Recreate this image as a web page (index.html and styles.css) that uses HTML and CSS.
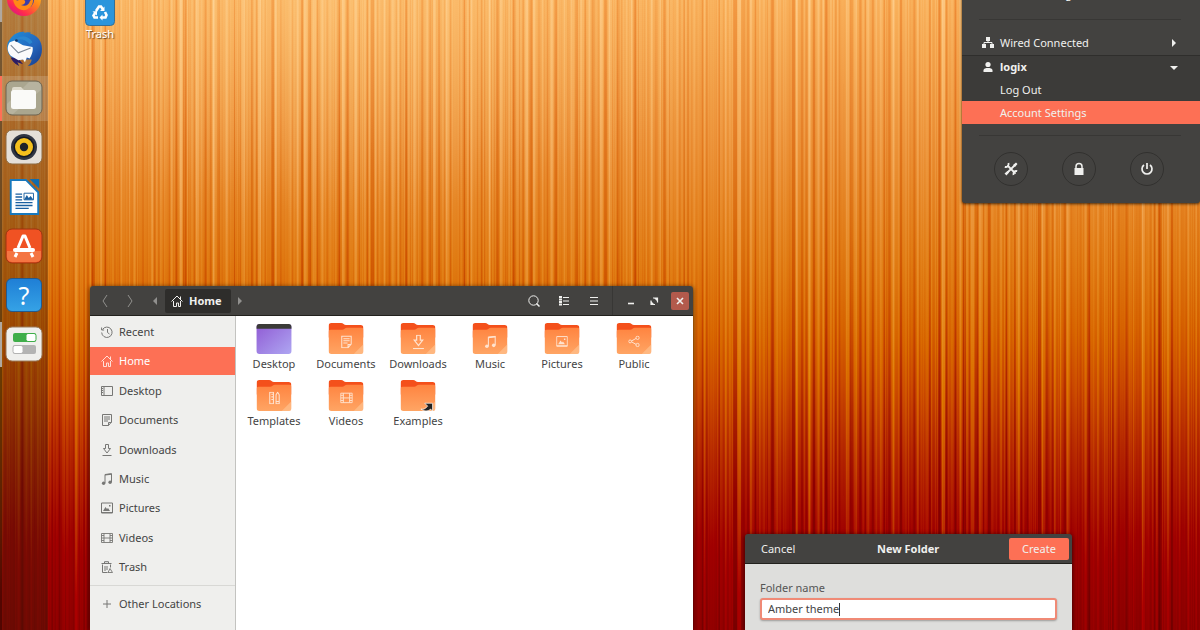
FILE: index.html
```
<!DOCTYPE html>
<html lang="en">
  <head>
    <meta charset="utf-8">
    <title>Desktop</title>
    <meta name="viewport" content="width=device-width, initial-scale=1">
    <link rel="stylesheet" href="styles.css">
  </head>
  <body>
    <!-- wallpaper -->
    <svg class="wallpaper" viewBox="0 0 1200 630" preserveAspectRatio="none" aria-hidden="true">
      <defs>
        <linearGradient id="wall" x1="0" y1="-100" x2="0" y2="700" gradientUnits="userSpaceOnUse">
          <stop offset="0" stop-color="#ffc880"/>
          <stop offset="0.12" stop-color="#f9b15c"/>
          <stop offset="0.3" stop-color="#ec9238"/>
          <stop offset="0.45" stop-color="#e07a12"/>
          <stop offset="0.54" stop-color="#d76400"/>
          <stop offset="0.61" stop-color="#cb4a00"/>
          <stop offset="0.7" stop-color="#b42400"/>
          <stop offset="0.8" stop-color="#a00000"/>
          <stop offset="1" stop-color="#820000"/>
        </linearGradient>
        <radialGradient id="glow" cx="460" cy="0" r="420" gradientUnits="userSpaceOnUse" gradientTransform="matrix(1 0 0 .5 0 0)">
          <stop offset="0" stop-color="#ffd28c" stop-opacity=".4"/>
          <stop offset="1" stop-color="#ffd28c" stop-opacity="0"/>
        </radialGradient>
        <filter id="streaks" x="-200" y="-200" width="1600" height="1030" filterUnits="userSpaceOnUse" color-interpolation-filters="sRGB">
          <feTurbulence type="fractalNoise" baseFrequency="0.24 0.00001" numOctaves="3" seed="12" result="noise"/>
          <feColorMatrix in="noise" values="1 0 0 0 0  0 1 0 0 0  0 0 1 0 0  0 0 0 0 1" result="solid"/>
          <feDisplacementMap in="SourceGraphic" in2="solid" scale="260" xChannelSelector="A" yChannelSelector="R" result="moved"/>
          <feColorMatrix in="solid" values="-.7 0 0 0 .85  -.7 0 0 0 .85  -.7 0 0 0 .85  0 0 0 0 1" result="gray"/>
          <feBlend in="gray" in2="moved" mode="soft-light"/>
        </filter>
      </defs>
      <g filter="url(#streaks)">
        <rect x="-200" y="-200" width="1600" height="1030" fill="url(#wall)"/>
        <rect x="-200" y="-200" width="1600" height="1030" fill="url(#glow)"/>
      </g>
    </svg>

    <!-- shared icons -->
    <svg class="sprite" aria-hidden="true">
      <defs>
        <linearGradient id="folder-front" x1="0" y1="0" x2="0" y2="1">
          <stop offset="0" stop-color="#ff8440"/>
          <stop offset="1" stop-color="#ffa564"/>
        </linearGradient>
        <symbol id="folder" viewBox="0 0 36 32">
          <path d="M0 3a3 3 0 0 1 3-3h10c2 0 3 2 5 2h15a3 3 0 0 1 3 3v10H0z" fill="#f4501b"/>
          <path d="M0 9a2 2 0 0 1 2-2h12c2 0 3-2 5-2h15a2 2 0 0 1 2 2v22a3 3 0 0 1-3 3H3a3 3 0 0 1-3-3z" fill="url(#folder-front)"/>
          <path d="M36 22v7a3 3 0 0 1-3 3h-7z" fill="#ffc08d" opacity=".7"/>
        </symbol>
        <symbol id="home" viewBox="0 0 12 12">
          <path d="M.5 6.500 6 1l5.500 5.500M9.500 1.500v2.500M2.500 6v5.500h3V8h2v3.500h2V6" fill="none" stroke="currentColor"/>
        </symbol>
        <symbol id="recent" viewBox="0 0 12 12">
          <path d="M1.500 3.500a5.200 5.200 0 1 1-.8 3M.6 1.500v2.500h2.500M6.500 3v3.500l2 1.500" fill="none" stroke="currentColor"/>
        </symbol>
        <symbol id="desktop" viewBox="0 0 12 12">
          <path d="M.5 1.500h11v9H.5zM3 1.500v9M.5 3.500h1.500M.5 5.500h1.500M.5 7.500h1.500" fill="none" stroke="currentColor"/>
        </symbol>
        <symbol id="documents" viewBox="0 0 12 12">
          <path d="M1.500.5h9v7.500l-3 3.500h-6zM3 3h6M3 5h6M3 7h4M7.500 11.500V8.500h3" fill="none" stroke="currentColor"/>
        </symbol>
        <symbol id="downloads" viewBox="0 0 12 12">
          <path d="M4.500.5h3v4h2L6 9 2.500 4.500h2zM1.500 11.500h9" fill="none" stroke="currentColor"/>
        </symbol>
        <symbol id="music" viewBox="0 0 12 12">
          <path d="M4 10V1.500L10.500.7V9" fill="none" stroke="currentColor"/>
          <path d="M4 2.500 10.500 1.700V.5L4 1.200z" fill="currentColor"/>
          <circle cx="2.600" cy="10.200" r="1.700" fill="currentColor"/><circle cx="9.100" cy="9.300" r="1.700" fill="currentColor"/>
        </symbol>
        <symbol id="pictures" viewBox="0 0 12 12">
          <path d="M.5 1h11v10H.5z" fill="none" stroke="currentColor"/>
          <path d="M2 9l2.500-4L6 7l1-1 2 3zM8 3h1.500v1.500H8zM.5 10h11v1H.5z" fill="currentColor"/>
        </symbol>
        <symbol id="videos" viewBox="0 0 12 12">
          <path d="M.5 1.500h11v9H.5zM3 1.500v9M9 1.500v9M3 6h6M.5 3.500H3M.5 6H3M.5 8.500H3M9 3.500h2.500M9 6h2.500M9 8.500h2.500" fill="none" stroke="currentColor" stroke-width=".9"/>
        </symbol>
        <symbol id="trash" viewBox="0 0 12 12">
          <path d="M1.500 3.500v8h5M9.500 3.500v3M.5 2.500h10M3.500 2V.7h4V2M4 5v5M6 5v4" fill="none" stroke="currentColor"/>
          <path d="M9 7.500l2.500 4H7z" fill="none" stroke="currentColor" stroke-width=".9"/>
        </symbol>
        <symbol id="plus" viewBox="0 0 12 12">
          <path d="M6 2v8M2 6h8" fill="none" stroke="currentColor"/>
        </symbol>
        <symbol id="share" viewBox="0 0 12 12">
          <path d="M3.500 5.500l4.500-2.500M3.500 6.500l4.500 2.500" stroke="currentColor"/>
          <g fill="none" stroke="currentColor"><circle cx="2" cy="6" r="1.500"/><circle cx="9.700" cy="2.300" r="1.700"/><circle cx="9.700" cy="9.700" r="1.700"/></g>
        </symbol>
        <symbol id="templates" viewBox="0 0 12 12">
          <path d="M1.500.5h3.500v11H1.500zM3 2.500h1.500M3 5h1.500M3 7.500h1.500M7.500 3 9 .5 10.500 3v8.500h-3zM7.500 9.500h3" fill="none" stroke="currentColor"/>
        </symbol>
      </defs>
    </svg>

    <nav class="dock" aria-label="Dock">
      <ul>
        <li class="running">
          <a href="#firefox" aria-label="Firefox">
            <svg viewBox="0 0 36 36">
              <defs><linearGradient id="fox" x1="1" y1="0" x2=".2" y2="1"><stop offset="0" stop-color="#ffe226"/><stop offset=".45" stop-color="#ff8a1a"/><stop offset=".8" stop-color="#ff2b4d"/><stop offset="1" stop-color="#d8148c"/></linearGradient></defs>
              <circle cx="18" cy="17" r="17" fill="url(#fox)"/>
              <circle cx="19" cy="18" r="9" fill="#3a3fa8"/>
              <path d="M7 16c2 2 4 3 6 2 2-1 5-1 6 1 1 3-2 4-4 4 4 2 8 0 9-4l3-3c1 8-5 13-11 12-5-1-9-6-9-12z" fill="#ff8a16"/>
            </svg>
          </a>
        </li>
        <li>
          <a href="#thunderbird" aria-label="Thunderbird">
            <svg viewBox="0 0 38 38">
              <defs><linearGradient id="bird" x1="0" y1="0" x2="1" y2="1"><stop offset="0" stop-color="#1f8fd8"/><stop offset=".6" stop-color="#2465bd"/><stop offset="1" stop-color="#173a86"/></linearGradient></defs>
              <path d="M4 9C8 3 14 0 20 1l-2 2c3-2 7-2 9-1l-2 1c8 1 13 8 13 16 0 10-6 17-15 18 3-3 4-5 4-7L9 30C2 27 0 18 2 12z" fill="url(#bird)"/>
              <path d="M5 28c2 5 5 7 9 9l-2-4 6 2-5-6z" fill="#2d1d63"/>
              <path d="M4 12l5-2 9 5 10 2c1 4-1 9-3 12l-3-1-2 5-2-3-5 1-8-5C1 22 1 16 4 12z" fill="#fbfbfb"/>
              <path d="M5 15l8 8 13-5" fill="none" stroke="#7d8794" stroke-width="1.200"/>
              <path d="M9 10c5-3 12-1 16 4l3-2c-4-8-15-8-19-2z" fill="#2a86cf"/>
              <circle cx="11" cy="10" r="1.400" fill="#17305c"/>
            </svg>
          </a>
        </li>
        <li class="active">
          <a href="#files" aria-label="Files">
            <svg viewBox="0 0 38 36">
              <rect x="1" y="1" width="36" height="34" rx="6" fill="#aaa68f" stroke="#6d6350"/>
              <path d="M24 2h7a5 5 0 0 1 5 5v3L8 34H7a5 5 0 0 1-5-5v-5z" fill="#b7b39f"/>
              <path d="M7 9a2 2 0 0 1 2-2h7l3 3h10v8H7z" fill="#dedacb"/>
              <rect x="6" y="10" width="25" height="19" rx="2.500" fill="#fafaf8"/>
            </svg>
          </a>
        </li>
        <li>
          <a href="#rhythmbox" aria-label="Rhythmbox">
            <svg viewBox="0 0 38 36">
              <rect x="1" y="1" width="36" height="34" rx="6" fill="#e4dfd8" stroke="#8d6b42"/>
              <circle cx="19" cy="18" r="13" fill="#303643"/><circle cx="19" cy="18" r="10.500" fill="#151a25"/>
              <circle cx="19" cy="18" r="9" fill="#f5c01d"/><circle cx="19" cy="18" r="4.200" fill="#202329"/>
            </svg>
          </a>
        </li>
        <li>
          <a href="#writer" aria-label="LibreOffice Writer">
            <svg viewBox="0 0 38 38">
              <path d="M5 1h16l13 13v23H5z" fill="#fff" stroke="#1878bd" stroke-width="2"/>
              <path d="M25 0h10v10z" fill="#0f6cae"/>
              <path d="M10 16h7M10 19h7M10 22h7M10 25h18M10 28h18M10 31h14" stroke="#1a5fa0" stroke-width="1.400"/>
              <path d="M19 15h10v7H19z" fill="#fff" stroke="#1a5fa0"/><path d="M19 22l3-5 2 3 2-2 3 4z" fill="#1a5fa0"/>
            </svg>
          </a>
        </li>
        <li>
          <a href="#software" aria-label="Software">
            <svg viewBox="0 0 38 36">
              <rect x="1" y="1" width="36" height="34" rx="6" fill="#f05223" stroke="#9c3410"/>
              <path d="M2 23h34v6a5 5 0 0 1-5 5H7a5 5 0 0 1-5-5z" fill="#f47542"/>
              <path d="M13 20l5-12h2l5 12M12 25l-2 4M26 25l2 4" fill="none" stroke="#fff" stroke-width="3" stroke-linejoin="round"/>
              <rect x="8" y="20" width="22" height="4" rx="2" fill="#fff"/>
            </svg>
          </a>
        </li>
        <li>
          <a class="help" href="#help" aria-label="Help">?</a>
        </li>
        <li class="running">
          <a href="#tweaks" aria-label="Tweaks">
            <svg viewBox="0 0 38 36">
              <rect x="1" y="1" width="36" height="34" rx="6" fill="#efefed" stroke="#9a7a5a"/>
              <rect x="8" y="7" width="23" height="9" rx="2" fill="#3fae4a"/><rect x="21" y="7.500" width="10" height="8" rx="2" fill="#fff" stroke="#3fae4a"/>
              <rect x="8" y="19" width="23" height="9" rx="2" fill="#b3b3b3"/><rect x="8" y="19.500" width="10" height="8" rx="2" fill="#fff" stroke="#b3b3b3"/>
            </svg>
          </a>
        </li>
      </ul>
    </nav>

    <a class="desktop-trash" href="#trash">
      <svg viewBox="0 0 30 40" aria-hidden="true">
        <rect x=".5" y="-10" width="29" height="49.500" rx="4" fill="#2b95dc" stroke="#376f94"/>
        <g fill="none" stroke="#fff" stroke-width="2.600">
          <path d="M11 25l3-4.500h2l2 3M20 26l1.500 3-1 2.500h-4M13 31.500h-3.500l-1-2 2-3"/>
        </g>
        <path d="M19.500 20.500v4.500h-4.500zM17.500 28.500v6l-3-3zM7.500 25.500l4.500-.5v4.500z" fill="#fff"/>
      </svg>
      <span>Trash</span>
    </a>

    <!-- system menu -->
    <section class="menu" aria-label="System menu">
      <button class="menu-row">
        <svg class="menu-icon" viewBox="0 0 12 12"><path d="M3 1h6v7L6 12 3 8z" fill="currentColor"/></svg>
        Power Settings
      </button>
      <hr>
      <button class="menu-row wired">
        <svg class="menu-icon" viewBox="0 0 12 12"><path d="M4 0h4v4H4zM0 7h4v4H0zM8 7h4v4H8z" fill="currentColor"/><path d="M6 4v2M2 7.500V5.500h8v2" fill="none" stroke="currentColor"/></svg>
        Wired Connected
        <svg class="arrow" viewBox="0 0 10 10"><path d="M3 1l4 4-4 4z" fill="currentColor"/></svg>
      </button>
      <div class="submenu">
        <button class="menu-row user">
          <svg class="menu-icon" viewBox="0 0 12 12"><circle cx="6" cy="3.500" r="2.600" fill="currentColor"/><path d="M1.500 11V9.500C1.500 7.500 4 7 6 7s4.500.5 4.500 2.500V11z" fill="currentColor"/></svg>
          logix
          <svg class="arrow" viewBox="0 0 10 10"><path d="M1 4h8L5 8z" fill="currentColor"/></svg>
        </button>
        <button class="menu-row"><span class="menu-icon"></span>Log Out</button>
        <button class="menu-row selected"><span class="menu-icon"></span>Account Settings</button>
      </div>
      <hr>
      <div class="actions">
        <button aria-label="Settings">
          <svg viewBox="0 0 14 14"><path d="M4 4l7 7M11 3l-8 8" stroke="currentColor" stroke-width="1.800" stroke-linecap="round"/><path d="M.8 4.800C3 5.500 5 4 4.500 1M13.200 9.200C11 8.500 9 10 9.500 13" fill="none" stroke="currentColor" stroke-width="1.800"/><path d="M12 .5l1.500 1.500-2.500 3-2-2zM3.500 9l1.500 1.500L2.500 13.500 .5 11.500z" fill="currentColor"/></svg>
        </button>
        <button aria-label="Lock">
          <svg viewBox="0 0 14 14"><path d="M2.500 6h9v7h-9z" fill="currentColor"/><path d="M4 6.500V4.500a3 3 0 0 1 6 0v2" fill="none" stroke="currentColor" stroke-width="1.500"/></svg>
        </button>
        <button aria-label="Power off">
          <svg viewBox="0 0 14 14"><path d="M4 3a5 5 0 1 0 6 0M7 1v6" fill="none" stroke="currentColor" stroke-width="1.700"/></svg>
        </button>
      </div>
    </section>

    <!-- file manager -->
    <main class="window files">
      <header class="titlebar">
        <button class="dim" aria-label="Back"><svg viewBox="0 0 12 12"><path d="M8 0L4 6l4 6" fill="none" stroke="currentColor"/></svg></button>
        <button class="dim" aria-label="Forward"><svg viewBox="0 0 12 12"><path d="M4 0l4 6-4 6" fill="none" stroke="currentColor"/></svg></button>
        <button class="dim crumb-arrow" aria-label="Scroll left"><svg viewBox="0 0 12 12"><path d="M8 2v8L4 6z" fill="currentColor"/></svg></button>
        <button class="crumb"><svg viewBox="0 0 12 12"><use href="#home"/></svg>Home</button>
        <button class="dim crumb-arrow" aria-label="Scroll right"><svg viewBox="0 0 12 12"><path d="M4 2v8l4-4z" fill="currentColor"/></svg></button>
        <div class="tools">
          <button aria-label="Search"><svg viewBox="0 0 12 12"><circle cx="5.500" cy="5.500" r="4.700" fill="none" stroke="currentColor"/><path d="M8.500 8.500l3 3" stroke="currentColor" stroke-width="1.500"/></svg></button>
          <button aria-label="List view"><svg viewBox="0 0 12 12"><path d="M1 2h3M1 4.500h3M1 7h3M1 9.500h3" stroke="currentColor" stroke-width="1.800"/><path d="M5 2.500h6M5 6h6M5 9.500h6" stroke="currentColor"/></svg></button>
          <button aria-label="Menu"><svg viewBox="0 0 12 12"><path d="M2 2.500h8M2 6h8M2 9.500h8" stroke="currentColor" stroke-width="1.200"/></svg></button>
        </div>
        <div class="controls">
          <button aria-label="Minimize"><svg viewBox="0 0 12 12"><path d="M3 8.500h6" stroke="currentColor" stroke-width="1.600"/></svg></button>
          <button aria-label="Maximize"><svg viewBox="0 0 12 12"><path d="M5 3h4.500v4.500M3 5.500v4h4" fill="none" stroke="currentColor" stroke-width="1.200"/><path d="M6 3h3.500v3.500zM3 6v3.500h3.500z" fill="currentColor"/></svg></button>
          <button class="close" aria-label="Close"><svg viewBox="0 0 12 12"><path d="M3 3l6 6M9 3l-6 6" stroke="currentColor" stroke-width="1.600"/></svg></button>
        </div>
      </header>
      <div class="window-body">
        <nav class="sidebar" aria-label="Places">
          <ul>
            <li><a href="#"><svg><use href="#recent"/></svg>Recent</a></li>
            <li class="current"><a href="#"><svg><use href="#home"/></svg>Home</a></li>
            <li><a href="#"><svg><use href="#desktop"/></svg>Desktop</a></li>
            <li><a href="#"><svg><use href="#documents"/></svg>Documents</a></li>
            <li><a href="#"><svg><use href="#downloads"/></svg>Downloads</a></li>
            <li><a href="#"><svg><use href="#music"/></svg>Music</a></li>
            <li><a href="#"><svg><use href="#pictures"/></svg>Pictures</a></li>
            <li><a href="#"><svg><use href="#videos"/></svg>Videos</a></li>
            <li><a href="#"><svg><use href="#trash"/></svg>Trash</a></li>
          </ul>
          <a class="other" href="#"><svg><use href="#plus"/></svg>Other Locations</a>
        </nav>
        <div class="grid">
          <a href="#">
            <svg viewBox="0 0 36 32">
              <defs><linearGradient id="violet" x1="0" y1="0" x2="1" y2="1"><stop offset="0" stop-color="#905bd4"/><stop offset="1" stop-color="#aea6f2"/></linearGradient></defs>
              <rect y="1" width="36" height="31" rx="3" fill="url(#violet)"/>
              <path d="M0 6V4a3 3 0 0 1 3-3h30a3 3 0 0 1 3 3v2z" fill="#3b3b38"/>
            </svg>Desktop
          </a>
          <a href="#"><svg viewBox="0 0 36 32"><use href="#folder"/><use class="emblem" href="#documents" x="12" y="13" width="13" height="13"/></svg>Documents</a>
          <a href="#"><svg viewBox="0 0 36 32"><use href="#folder"/><use class="emblem" href="#downloads" x="11" y="12" width="15" height="15"/></svg>Downloads</a>
          <a href="#"><svg viewBox="0 0 36 32"><use href="#folder"/><use class="emblem" href="#music" x="12" y="13" width="13" height="13"/></svg>Music</a>
          <a href="#"><svg viewBox="0 0 36 32"><use href="#folder"/><use class="emblem" href="#pictures" x="12" y="13" width="12" height="12"/></svg>Pictures</a>
          <a href="#"><svg viewBox="0 0 36 32"><use href="#folder"/><use class="emblem" href="#share" x="12" y="13" width="12" height="12"/></svg>Public</a>
          <a href="#"><svg viewBox="0 0 36 32"><use href="#folder"/><use class="emblem" href="#templates" x="12" y="12" width="13" height="13"/></svg>Templates</a>
          <a href="#"><svg viewBox="0 0 36 32"><use href="#folder"/><use class="emblem" href="#videos" x="12" y="12" width="13" height="13"/></svg>Videos</a>
          <a href="#">
            <svg viewBox="0 0 36 32"><use href="#folder"/><path d="M25 24h8v8l-2-2c-3 3-7 2-10 0 3 1 5-1 7-3z" fill="#222" stroke="#fff" stroke-width=".7"/></svg>Examples
          </a>
        </div>
      </div>
    </main>

    <!-- new folder dialog -->
    <form class="window dialog">
      <header class="titlebar">
        <button type="button" class="cancel">Cancel</button>
        <h2>New Folder</h2>
        <button type="submit" class="create">Create</button>
      </header>
      <div class="dialog-body">
        <label for="folder-name">Folder name</label>
        <div class="field">
          <input id="folder-name" type="text" value="Amber theme">
          <span class="caret"></span>
        </div>
      </div>
    </form>
  </body>
</html>
```
FILE: styles.css
```
* {
  box-sizing: border-box;
}
body {
  margin: 0;
  height: 100vh;
  overflow: hidden;
  position: relative;
  background-color: #b03000;
  font-family: "Noto Sans", sans-serif;
  font-size: 11px;
  line-height: 16px;
  color: #444;
}
a {
  color: inherit;
  text-decoration: none;
}
ul {
  list-style: none;
  margin: 0;
  padding: 0;
}
button {
  border: 0;
  padding: 0;
  background: none;
  color: inherit;
  font: inherit;
}
svg {
  display: block;
}
.wallpaper {
  position: absolute;
  inset: 0;
  width: 100%;
  height: 100%;
}
.sprite {
  position: absolute;
  width: 0;
  height: 0;
}

/* dock */
.dock {
  position: absolute;
  top: 0;
  bottom: 0;
  left: 0;
  width: 48px;
  background: rgba(50, 30, 10, 0.35);
  box-shadow: inset 2px 0 rgba(0, 0, 0, 0.35);
}
.dock ul {
  height: 390px;
  margin-top: -23px;
  display: flex;
  flex-direction: column;
  justify-content: space-between;
}
.dock li {
  height: 45px;
  display: flex;
  align-items: center;
  justify-content: center;
  border-left: 2px solid transparent;
  padding-right: 2px;
}
.dock li.running {
  border-left-color: #b0a8a0;
}
.dock li.active {
  border-left-color: #ff6f55;
  background: rgba(255, 255, 255, 0.16);
}
.dock svg {
  width: 38px;
  height: 36px;
}
.help {
  width: 36px;
  height: 34px;
  border-radius: 6px;
  border: 1px solid #25598a;
  background: linear-gradient(#1f7fd6, #35a2e6);
  color: #fff;
  font-size: 25px;
  line-height: 32px;
  text-align: center;
}

.desktop-trash {
  position: absolute;
  top: -14px;
  left: 70px;
  width: 60px;
  display: flex;
  flex-direction: column;
  align-items: center;
  color: #fff;
  text-shadow: 1px 1px 1px rgba(0, 0, 0, 0.6);
}
.desktop-trash svg {
  width: 30px;
  height: 40px;
}

/* system menu */
.menu {
  position: absolute;
  top: -18px;
  right: 0;
  width: 238px;
  padding-bottom: 17px;
  background: #434240;
  color: #f0f0ee;
  border-radius: 0 0 3px 3px;
  box-shadow: 0 1px 3px rgba(0, 0, 0, 0.7);
}
.menu hr {
  margin: 11px 19px 11px 17px;
  border: 0;
  border-top: 1px solid #383735;
}
.menu > .menu-row + hr {
  margin-top: 14px;
}
.menu-row {
  width: 100%;
  height: 23px;
  padding: 0 21px 0 20px;
  display: flex;
  align-items: center;
  gap: 6px;
  text-align: left;
}
.menu .wired {
  height: 24px;
}
.menu-icon {
  width: 12px;
  height: 12px;
}
.arrow {
  width: 10px;
  height: 10px;
  margin-left: auto;
}
.submenu {
  background: #3c3b39;
  box-shadow: inset 0 1px #2f2e2c;
}
.user {
  font-weight: bold;
}
.selected {
  background: #fd7055;
}
.actions {
  padding: 5px 36px 0 32px;
  display: flex;
  justify-content: space-between;
}
.actions button {
  width: 34px;
  height: 34px;
  border: 1px solid #32312f;
  border-radius: 50%;
  display: flex;
  align-items: center;
  justify-content: center;
}
.actions svg {
  width: 14px;
  height: 14px;
}

/* windows */
.window {
  position: absolute;
  bottom: 0;
  display: flex;
  flex-direction: column;
  border-radius: 3px 3px 0 0;
  box-shadow: 0 1px 5px rgba(0, 0, 0, 0.7);
}
.titlebar {
  height: 30px;
  display: flex;
  align-items: center;
  background: #434240;
  border-bottom: 1px solid #22211d;
  border-radius: 3px 3px 0 0;
  color: #f0f0ee;
}
.titlebar svg {
  width: 12px;
  height: 12px;
}
.files {
  top: 286px;
  left: 90px;
  width: 603px;
}
.files .titlebar {
  padding-left: 9px;
}
.dim {
  color: #91908e;
  margin-right: 13px;
}
.crumb-arrow {
  margin-right: 4px;
}
.crumb {
  height: 24px;
  padding: 0 9px 0 6px;
  margin-right: 3px;
  display: flex;
  align-items: center;
  gap: 6px;
  background: #2e2d2b;
  border-radius: 2px;
  font-weight: bold;
}
.tools {
  margin-left: auto;
  padding-right: 12px;
  display: flex;
  gap: 18px;
}
.controls {
  height: 29px;
  padding: 0 4px 0 12px;
  display: flex;
  align-items: center;
  gap: 11px;
  border-left: 1px solid #383735;
}
.close {
  width: 18px;
  height: 18px;
  display: flex;
  align-items: center;
  justify-content: center;
  background: #b35a4c;
  border-radius: 2px;
}
.window-body {
  flex: 1;
  display: flex;
  background: #fff;
}
.sidebar {
  width: 146px;
  padding-top: 2px;
  background: #efefed;
  border-right: 1px solid #c3c3c0;
}
.sidebar ul {
  height: 263px;
  display: flex;
  flex-direction: column;
  justify-content: space-between;
}
.sidebar a {
  height: 28px;
  padding-left: 11px;
  display: flex;
  align-items: center;
  gap: 6px;
}
.sidebar svg {
  width: 12px;
  height: 12px;
  color: #777775;
}
.sidebar .current {
  background: #fd7055;
  color: #fff;
}
.sidebar .current svg {
  color: #ffe0d8;
}
.sidebar .other {
  margin-top: 4px;
  height: 37px;
  border-top: 1px solid #d8d8d5;
}
.grid {
  flex: 1;
  padding: 7px 2px;
  display: grid;
  grid-template-columns: repeat(auto-fill, 72px);
  grid-auto-rows: 49px;
  row-gap: 8px;
}
.grid a {
  display: flex;
  flex-direction: column;
  align-items: center;
  gap: 2px;
}
.grid svg {
  width: 36px;
  height: 32px;
}
.emblem {
  color: #ffe3cf;
}

/* dialog */
.dialog {
  top: 534px;
  left: 745px;
  width: 327px;
}
.dialog .titlebar {
  justify-content: space-between;
  padding: 0 3px 0 16px;
}
.dialog h2 {
  margin: 0;
  padding-left: 12px;
  font-size: 11px;
}
.create {
  width: 60px;
  height: 22px;
  background: #fd7055;
  border-radius: 2px;
}
.dialog-body {
  flex: 1;
  padding: 16px 15px 0;
  display: flex;
  flex-direction: column;
  gap: 2px;
  background: #dededc;
}
.dialog-body label {
  color: #555;
}
.field {
  height: 22px;
  padding: 0 6px;
  display: flex;
  align-items: center;
  border: 2px solid #f08a76;
  border-radius: 3px;
  box-shadow: 0 1px 2px rgba(0, 0, 0, 0.3);
  background: #fff;
}
.field input {
  field-sizing: content;
  max-width: 100%;
  padding: 0;
  border: 0;
  outline: 0;
  background: none;
  color: #444;
  font: inherit;
}
.caret {
  width: 1px;
  height: 13px;
  background: #333;
}
```
